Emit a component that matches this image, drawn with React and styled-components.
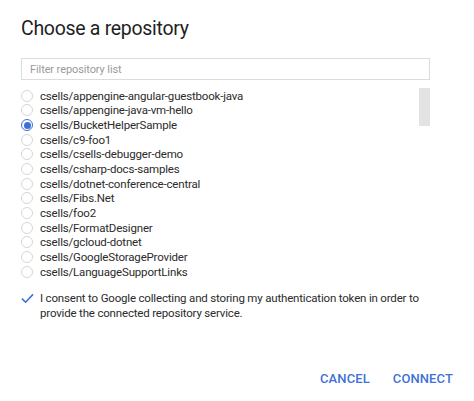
import styled, { createGlobalStyle } from "styled-components"

const GlobalStyle = createGlobalStyle`
    html, body {
        margin: 0;
        padding: 0;
        background: #fff;
    }
    body {
        font-family: Roboto, "Noto Sans", Arial, sans-serif;
    }
`

const Dialog = styled.div`
    width: 474px;
    height: 401px;
    box-sizing: border-box;
    padding: 17px 21px 0 21px;
    display: flex;
    flex-direction: column;
`

const Title = styled.h1`
    margin: 0;
    font-size: 19.5px;
    font-weight: 400;
    letter-spacing: -0.3px;
    line-height: 23.4px;
    color: #1f1f1f;
`

const Filter = styled.input`
    margin-top: 18px;
    width: 409px;
    height: 22px;
    box-sizing: border-box;
    border: 1px solid #dcdcdc;
    padding: 0 8px;
    font-family: inherit;
    font-size: 11px;
    letter-spacing: -0.1px;
    color: #333;
    outline: none;
    &::placeholder {
        color: #9a9a9a;
    }
`

const ListBox = styled.div`
    position: relative;
    margin-top: 8px;
    width: 409px;
    height: 191px;
    overflow: hidden;
`

const Thumb = styled.div`
    position: absolute;
    top: 0;
    right: 0;
    width: 11px;
    height: 38px;
    background: #e3e3e3;
`

const Row = styled.label`
    display: flex;
    align-items: center;
    height: 14.67px;
    font-size: 11.5px;
    letter-spacing: -0.18px;
    color: #2b2b2b;
    cursor: pointer;
`

const Radio = styled.span`
    width: 12px;
    height: 12px;
    box-sizing: border-box;
    border-radius: 50%;
    border: 1px solid ${props => props.checked ? "#3d6fd9" : "#d6d6d6"};
    margin-right: 7px;
    display: flex;
    align-items: center;
    justify-content: center;
    flex-shrink: 0;
    &::after {
        content: "";
        width: 7px;
        height: 7px;
        border-radius: 50%;
        background: ${props => props.checked ? "#3d6fd9" : "transparent"};
    }
`

const Consent = styled.div`
    margin-top: 12px;
    display: flex;
    align-items: flex-start;
    font-size: 11.5px;
    letter-spacing: -0.18px;
    line-height: 15px;
    color: #2b2b2b;
`

const Check = styled.span`
    width: 13px;
    height: 15px;
    margin-right: 6px;
    display: flex;
    align-items: center;
    justify-content: center;
    flex-shrink: 0;
`

const Actions = styled.div`
    margin-top: auto;
    margin-bottom: 15px;
    display: flex;
    justify-content: flex-end;
    gap: 23px;
`

const Button = styled.button`
    border: none;
    background: none;
    padding: 0;
    height: 16px;
    font-family: inherit;
    font-size: 13px;
    font-weight: 500;
    letter-spacing: 0.1px;
    color: #3f72d6;
    cursor: pointer;
`

const repos = [
    "csells/appengine-angular-guestbook-java",
    "csells/appengine-java-vm-hello",
    "csells/BucketHelperSample",
    "csells/c9-foo1",
    "csells/csells-debugger-demo",
    "csells/csharp-docs-samples",
    "csells/dotnet-conference-central",
    "csells/Fibs.Net",
    "csells/foo2",
    "csells/FormatDesigner",
    "csells/gcloud-dotnet",
    "csells/GoogleStorageProvider",
    "csells/LanguageSupportLinks",
]

const App = () => {
  return (
    <>
      <GlobalStyle />
      <Dialog>
        <Title>Choose a repository</Title>
        <Filter placeholder="Filter repository list" />
        <ListBox>
          {repos.map(r => (
            <Row key={r}>
              <Radio checked={r === "csells/BucketHelperSample"} />
              {r}
            </Row>
          ))}
          <Thumb />
        </ListBox>
        <Consent>
          <Check>
            <svg width="13" height="11" viewBox="0 0 13 11">
              <path d="M1 5.6 L4.6 9.2 L12 1.4" fill="none" stroke="#3d6fd9" strokeWidth="1.6" />
            </svg>
          </Check>
          <span>I consent to Google collecting and storing my authentication token in order to provide the connected repository service.</span>
        </Consent>
        <Actions>
          <Button>CANCEL</Button>
          <Button>CONNECT</Button>
        </Actions>
      </Dialog>
    </>
  )
}

export default App
